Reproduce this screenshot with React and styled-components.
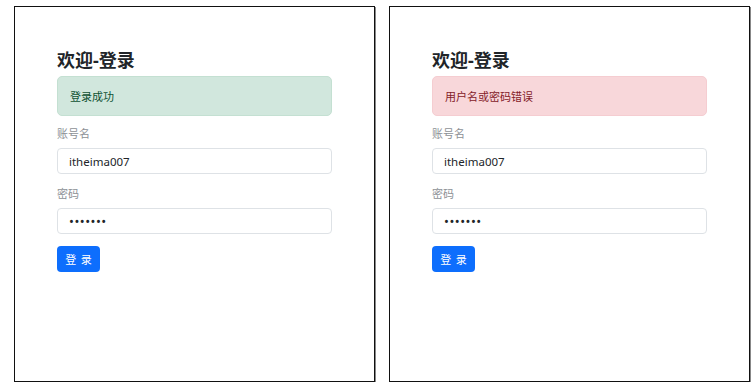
import styled, { createGlobalStyle } from "styled-components";

const GlobalStyle = createGlobalStyle`
    body {
        margin: 0;
        background: #fff;
        font-family: "Noto Sans", "Noto Sans CJK SC", sans-serif;
    }
`

const Page = styled.main`
    display: flex;
    gap: 14px;
    padding: 6px 0 0 14px;
`

const Panel = styled.section`
    box-sizing: border-box;
    width: 361px;
    height: 376px;
    padding: 42px 42px 0 42px;
    border: 1.5px solid #111;
    box-shadow: 1px 1px 0 #888;
    background: #fff;
`

const Title = styled.h2`
    margin: 0 0 5px;
    font-size: 18px;
    line-height: 22px;
    font-weight: 700;
    color: #212529;
`

const Alert = styled.div`
    box-sizing: border-box;
    height: 40px;
    display: flex;
    align-items: center;
    padding: 0 12px;
    margin-bottom: 10px;
    border-radius: 5px;
    font-size: 11px;
    border: 1px solid ${({ ok }) => (ok ? "#c4e0d2" : "#f5cdd1")};
    background: ${({ ok }) => (ok ? "#d1e7dd" : "#f8d7da")};
    color: ${({ ok }) => (ok ? "#0f5132" : "#842029")};
`

const Label = styled.label`
    display: block;
    font-size: 11px;
    line-height: 16px;
    color: #8d9196;
    margin-bottom: 6px;
`

const Input = styled.input`
    box-sizing: border-box;
    display: block;
    width: 100%;
    height: 26px;
    padding: 0 11px;
    margin-bottom: 12px;
    border: 1px solid #dee2e6;
    border-radius: 4px;
    font-family: "Noto Sans", sans-serif;
    font-size: ${({ type }) => (type === "password" ? "13px" : "11.5px")};
    letter-spacing: ${({ type }) => (type === "password" ? "0.5px" : "0")};
    color: #212529;
    background: #fff;
    outline: none;
`

const Button = styled.button`
    width: 43px;
    height: 26px;
    padding: 0 0 0 1px;
    border: none;
    border-radius: 4px;
    background: #0d6efd;
    color: #fff;
    font-family: "Noto Sans CJK SC", sans-serif;
    font-size: 11px;
    letter-spacing: 1px;
    white-space: pre;
`

function LoginCard({ ok, message }) {
    return (
        <Panel>
            <Title>欢迎-登录</Title>
            <Alert ok={ok}>{message}</Alert>
            <Label>账号名</Label>
            <Input type="text" defaultValue="itheima007" readOnly />
            <Label>密码</Label>
            <Input type="password" defaultValue="1234567" readOnly />
            <Button>{"登 录"}</Button>
        </Panel>
    )
}

export default function App() {
    return (
        <>
            <GlobalStyle />
            <Page>
                <LoginCard ok message="登录成功" />
                <LoginCard message="用户名或密码错误" />
            </Page>
        </>
    )
}
